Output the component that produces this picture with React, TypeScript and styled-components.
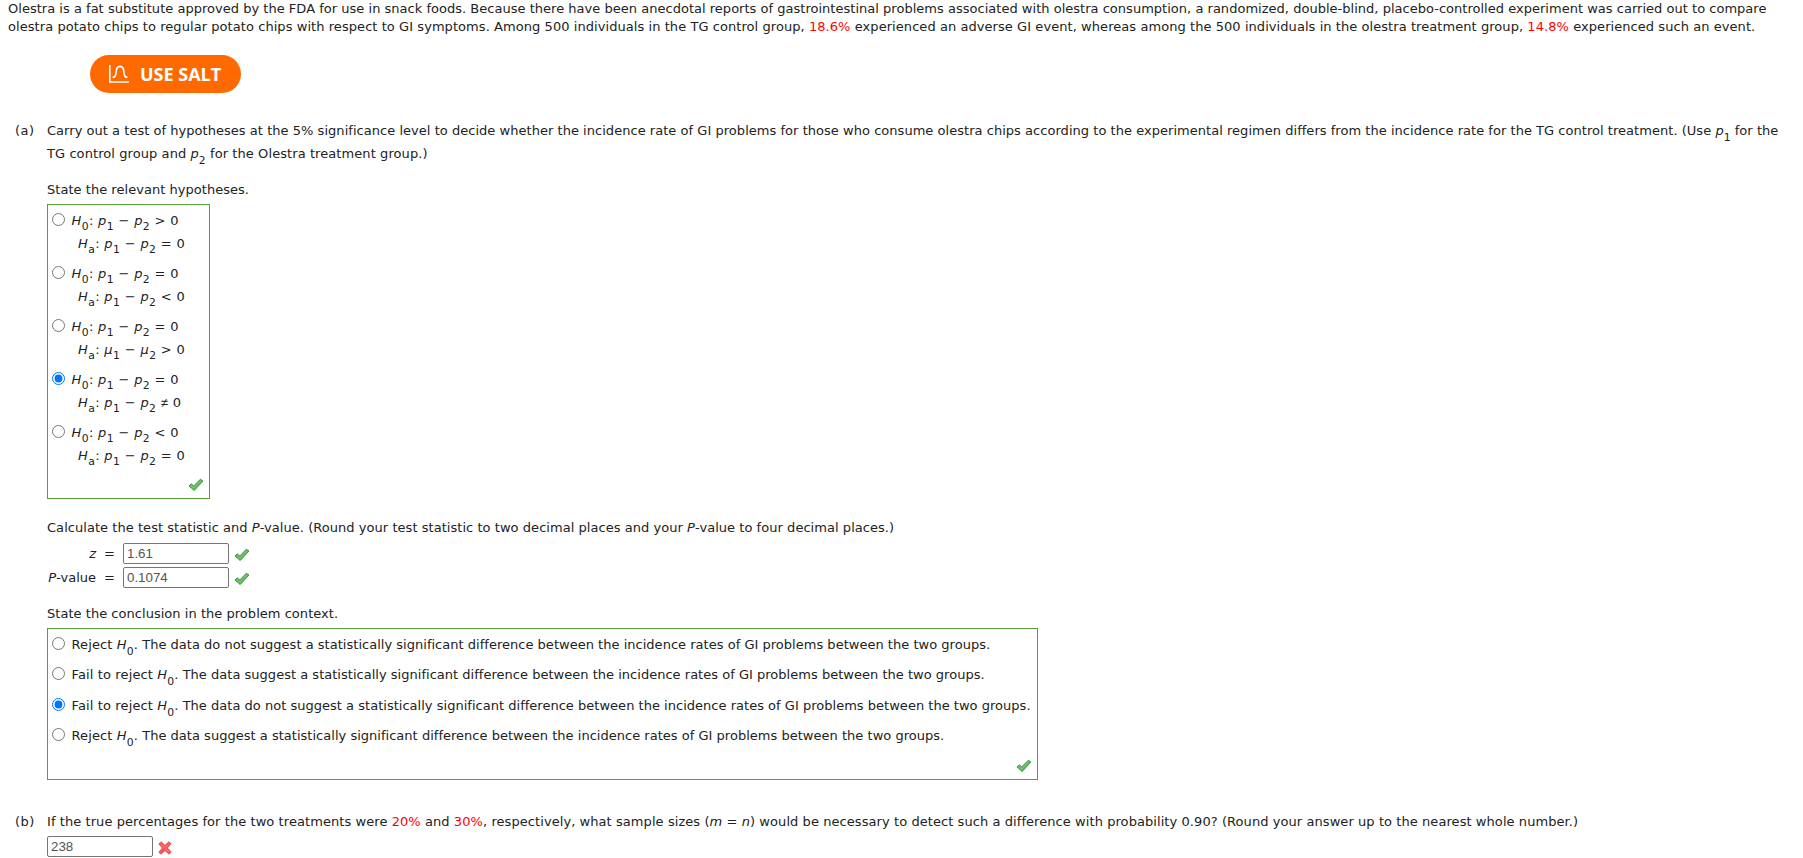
import React from 'react'
import styled, { createGlobalStyle } from 'styled-components'

const GlobalStyle = createGlobalStyle`
  body {
    margin: 0;
    background: #fff;
    overflow: hidden;
  }
`

interface Hypothesis {
  h0: React.ReactNode
  ha: React.ReactNode
  symbol?: string
  checked?: boolean
}

/* the arial-like face has the narrow not-equal sign */
const NotEqual = styled.span`
  font-family: 'Liberation Sans', Arial, sans-serif;
  line-height: 0;
`

const hypotheses: Hypothesis[] = [
  { h0: '> 0', ha: '= 0' },
  { h0: '= 0', ha: '< 0' },
  { h0: '= 0', ha: '> 0', symbol: 'μ' },
  {
    h0: '= 0',
    ha: (
      <React.Fragment>
        <NotEqual>≠</NotEqual> 0
      </React.Fragment>
    ),
    checked: true,
  },
  { h0: '< 0', ha: '= 0' },
]

const conclusions = [
  { start: 'Reject', rest: 'The data do not suggest' },
  { start: 'Fail to reject', rest: 'The data suggest' },
  { start: 'Fail to reject', rest: 'The data do not suggest', checked: true },
  { start: 'Reject', rest: 'The data suggest' },
]

const CheckMark = () => (
  <Mark width='16' height='14' viewBox='0 0 16 14'>
    <path
      d='M1 8 L3.2 5.8 L5.8 7.9 L12.4 1.2 L15 3 L6.2 12.6 Z'
      fill='#5fb85b'
      stroke='#3f9243'
      strokeWidth='0.9'
      strokeLinejoin='round'
    />
    <path d='M2.4 7.6 L5.8 10 L13.2 2.6' fill='none' stroke='#7fcb7a' strokeWidth='1' />
  </Mark>
)

const CrossMark = () => (
  <Mark width='14' height='14' viewBox='0 0 14 14'>
    <path
      d='M0.8 3 L3 0.8 L7 4.4 L10.8 0.8 L13 2.6 L9.4 7 L13.2 11 L11.2 13.2 L7 9.6 L3 13.2 L0.8 11.2 L4.4 7 Z'
      fill='#f5585a'
      stroke='#e4484d'
      strokeWidth='0.9'
      strokeLinejoin='round'
    />
    <path d='M2.4 2.6 L11.4 11.4 M11.4 2.4 L8 6' stroke='#ff7d7b' strokeWidth='1' />
  </Mark>
)

const Var = ({ name, index, drop }: { name: string; index: string; drop?: number }) => (
  <React.Fragment>
    <i>{name}</i>
    <Sub $drop={drop}>{index}</Sub>
  </React.Fragment>
)

const Difference = ({ symbol = 'p' }: { symbol?: string }) => (
  <React.Fragment>
    <Var name={symbol} index='1' drop={5} /> − <Var name={symbol} index='2' drop={5} />
  </React.Fragment>
)

const App = () => {
  return (
    <React.Fragment>
      <GlobalStyle />
      <Page>
        <Intro>
          <Line $track={0.02}>
            Olestra is a fat substitute approved by the FDA for use in snack foods. Because there have been anecdotal
            reports of gastrointestinal problems associated with olestra consumption, a randomized, double-blind,
            placebo-controlled experiment was carried out to compare
          </Line>
          <Line $track={0.063}>
            olestra potato chips to regular potato chips with respect to GI symptoms. Among 500 individuals in the TG
            control group, <Red>18.6%</Red> experienced an adverse GI event, whereas among the 500 individuals in the
            olestra treatment group, <Red>14.8%</Red> experienced such an event.
          </Line>
        </Intro>

        <SaltButton>
          <svg width='20' height='18' viewBox='0 0 20 18' fill='none' stroke='#fff'>
            <path d='M0.8 0 V17 H20' strokeWidth='1.6' />
            <path
              d='M3.6 12.4 C6.4 12.4 6.9 10.5 7.1 7.2 C7.3 3.4 8.4 1.4 11 1.4 C13.6 1.4 14.7 3.4 14.9 7.2 C15.1 10.5 15.8 12.4 18.4 12.4'
              strokeWidth='1.7'
            />
          </svg>
          USE SALT
        </SaltButton>

        <Part>
          <Letter>(a)</Letter>
          <Content>
            <Line $height={23}>
              Carry out a test of hypotheses at the 5% significance level to decide whether the incidence rate of GI
              problems for those who consume olestra chips according to the experimental regimen differs from the
              incidence rate for the TG control treatment. (Use <Var name='p' index='1' /> for the
            </Line>
            <Line $height={23} $track={0.08}>
              TG control group and <Var name='p' index='2' /> for the Olestra treatment group.)
            </Line>

            <Heading>State the relevant hypotheses.</Heading>
            <Answers $width={163} $height={295}>
              {hypotheses.map((item, index) => (
                <Hypotheses key={index}>
                  <Radio name='hypothesis' defaultChecked={item.checked} />
                  <div>
                    <Line $height={23} $track={0.36}>
                      <Var name='H' index='0' drop={5} />: <Difference /> {item.h0}
                    </Line>
                    <Alternative $height={23} $track={0.36}>
                      <Var name='H' index='a' drop={5} />: <Difference symbol={item.symbol} /> {item.ha}
                    </Alternative>
                  </div>
                </Hypotheses>
              ))}
              <Result>
                <CheckMark />
              </Result>
            </Answers>

            <Calculate $track={0.045}>
              Calculate the test statistic and <i>P</i>-value. (Round your test statistic to two decimal places and your{' '}
              <i>P</i>-value to four decimal places.)
            </Calculate>
            <Field>
              <Label>
                <i>z</i>
              </Label>
              <Equals>=</Equals>
              <Input defaultValue='1.61' />
              <FieldMark>
                <CheckMark />
              </FieldMark>
            </Field>
            <Field>
              <Label>
                <i>P</i>-value
              </Label>
              <Equals>=</Equals>
              <Input defaultValue='0.1074' />
              <FieldMark>
                <CheckMark />
              </FieldMark>
            </Field>

            <Conclusion>State the conclusion in the problem context.</Conclusion>
            <Answers $width={991} $height={152}>
              {conclusions.map((item, index) => (
                <Statement key={index}>
                  <Radio name='conclusion' defaultChecked={item.checked} />
                  <Line $height={23} $track={0.02}>
                    <Start>
                      {item.start} <Var name='H' index='0' />.
                    </Start>{' '}
                    {item.rest} a statistically significant difference between the incidence rates of GI problems
                    between the two groups.
                  </Line>
                </Statement>
              ))}
              <Result>
                <CheckMark />
              </Result>
            </Answers>
          </Content>
        </Part>

        <PartB>
          <Letter>(b)</Letter>
          <Content>
            <Line $height={23} $track={0.071}>
              If the true percentages for the two treatments were <Red>20%</Red> and <Red>30%</Red>, respectively, what
              sample sizes (<i>m</i> = <i>n</i>) would be necessary to detect such a difference with probability 0.90?
              (Round your answer up to the nearest whole number.)
            </Line>
            <LastField>
              <Input defaultValue='238' />
              <FieldMark>
                <CrossMark />
              </FieldMark>
            </LastField>
          </Content>
        </PartB>
      </Page>
    </React.Fragment>
  )
}

export default App

const Page = styled.main`
  box-sizing: border-box;
  width: 1803px;
  height: 858px;
  overflow: hidden;
  color: #222;
  font-family: 'DejaVu Sans', Verdana, sans-serif;
  font-size: 13px;
`

const Line = styled.div<{ $height?: number; $track?: number }>`
  height: ${({ $height = 18 }) => $height}px;
  line-height: ${({ $height = 18 }) => $height}px;
  letter-spacing: ${({ $track = 0.035 }) => $track}px;
  white-space: nowrap;
`

const Intro = styled.section`
  padding-left: 8px;
`

const Red = styled.span`
  color: #f00;
`

const Sub = styled.sub<{ $drop?: number }>`
  font-size: 10.8px;
  line-height: 0;
  vertical-align: -${({ $drop = 6 }) => $drop}px;
`

const Start = styled.span`
  letter-spacing: 0.13px;
`

const SaltButton = styled.button`
  display: flex;
  align-items: center;
  gap: 11px;
  width: 151px;
  height: 38px;
  margin: 19px 0 0 90px;
  padding: 0 0 0 19px;
  border: 0;
  border-radius: 19px;
  background: #ff6a00;
  color: #fff;
  font: 700 18px 'Open Sans', sans-serif;
  white-space: nowrap;
`

const Part = styled.section`
  display: flex;
  margin-top: 26px;
`

const PartB = styled(Part)`
  margin-top: 30px;
`

const Letter = styled.div`
  flex: none;
  width: 32px;
  padding-left: 15px;
  line-height: 23px;
  letter-spacing: 0.5px;
`

const Content = styled.div`
  flex: 1;
  min-width: 0;
`

const Heading = styled(Line)`
  margin: 16px 0 5px;
`

const Calculate = styled(Line)`
  margin: 20px 0 6px;
`

const Conclusion = styled(Line)`
  margin: 17px 0 5px;
`

const Answers = styled.div<{ $width: number; $height: number }>`
  display: flex;
  flex-direction: column;
  box-sizing: border-box;
  width: ${({ $width }) => $width}px;
  height: ${({ $height }) => $height}px;
  padding: 4px 5px 6px 4px;
  border: 1px solid #57a038;
`

const Hypotheses = styled.div`
  display: flex;
  align-items: flex-start;
  height: 53px;
`

const Alternative = styled(Line)`
  padding-left: 6.5px;
`

const Statement = styled.div`
  display: flex;
  align-items: flex-start;
  height: 30.3px;
`

const Radio = styled.input.attrs({ type: 'radio' })`
  flex: none;
  width: 13px;
  height: 13px;
  margin: 4px 6.5px 0 0;
`

const Result = styled.div`
  display: flex;
  justify-content: flex-end;
  margin-top: auto;
`

const Mark = styled.svg`
  display: block;
  flex: none;
`

const Field = styled.div`
  display: flex;
  align-items: center;
  height: 21px;
  margin-bottom: 3px;
`

const FieldMark = styled.span`
  padding-top: 3px;
`

const LastField = styled(Field)`
  margin: 3px 0 0;
`

const Label = styled.span`
  width: 49px;
  text-align: right;
  white-space: nowrap;
`

const Equals = styled.span`
  width: 27px;
  text-align: center;
`

const Input = styled.input`
  box-sizing: border-box;
  width: 106px;
  height: 21px;
  margin: 0 5px 0 0;
  padding: 1px 3px;
  border: 1px solid #767676;
  border-radius: 2px;
  color: #545454;
  font: 13.33px 'Liberation Sans', Arial, sans-serif;
`
